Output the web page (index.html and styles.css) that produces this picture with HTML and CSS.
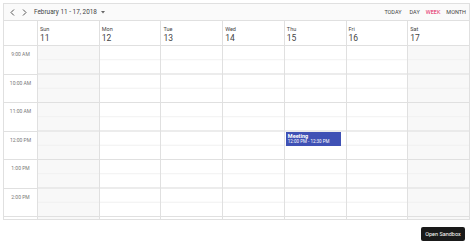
FILE: index.html
```html
<!DOCTYPE html>
<html lang="en">
<head>
    <meta charset="UTF-8">
    <title>Scheduler</title>
    <link rel="stylesheet" href="styles.css">
</head>
<body>
    <div class="schedule">
        <div class="toolbar">
            <div class="nav">
                <svg class="chev" width="5" height="7" viewBox="0 0 5 7"><path d="M4 0.5L1 3.5L4 6.5" fill="none" stroke="#555" stroke-width="1"/></svg>
                <svg class="chev" width="5" height="7" viewBox="0 0 5 7"><path d="M1 0.5L4 3.5L1 6.5" fill="none" stroke="#555" stroke-width="1"/></svg>
                <span class="range">February 11 - 17, 2018</span>
                <svg class="caret" width="4" height="3" viewBox="0 0 4 3"><path d="M0 0h4L2 2.5z" fill="#666"/></svg>
            </div>
            <div class="views">
                <span class="today">TODAY</span>
                <span>DAY</span>
                <span class="active">WEEK</span>
                <span>MONTH</span>
            </div>
        </div>
        <div class="head">
            <div class="corner"></div>
            <div class="day"><span class="dname">Sun</span><span class="dnum">11</span></div>
            <div class="day"><span class="dname">Mon</span><span class="dnum">12</span></div>
            <div class="day"><span class="dname">Tue</span><span class="dnum">13</span></div>
            <div class="day"><span class="dname">Wed</span><span class="dnum">14</span></div>
            <div class="day"><span class="dname">Thu</span><span class="dnum">15</span></div>
            <div class="day"><span class="dname">Fri</span><span class="dnum">16</span></div>
            <div class="day"><span class="dname">Sat</span><span class="dnum">17</span></div>
        </div>
        <div class="body">
            <div class="times">
                <div class="hour">9:00 AM</div>
                <div class="hour">10:00 AM</div>
                <div class="hour">11:00 AM</div>
                <div class="hour">12:00 PM</div>
                <div class="hour">1:00 PM</div>
                <div class="hour">2:00 PM</div>
                <div class="hour"></div>
            </div>
            <div class="col off"></div>
            <div class="col"></div>
            <div class="col"></div>
            <div class="col"></div>
            <div class="col">
                <div class="event">
                    <div class="ev-title">Meeting</div>
                    <div class="ev-time">12:00 PM - 12:30 PM</div>
                </div>
            </div>
            <div class="col"></div>
            <div class="col off"></div>
        </div>
    </div>
    <div class="footer">
        <button class="sandbox">Open Sandbox</button>
    </div>
</body>
</html>
```

FILE: styles.css
```css
body {
    margin: 0;
    padding: 3px;
    font-family: Roboto, "Liberation Sans", sans-serif;
    color: #333;
    background: #fff;
}

.schedule {
    width: 465px;
    border: 1px solid #e0e0e0;
}

.toolbar {
    height: 16px;
    background: #fafafa;
    border-bottom: 1px solid #e0e0e0;
    display: flex;
    align-items: center;
    justify-content: space-between;
    font-size: 6.4px;
}

.nav {
    display: flex;
    align-items: center;
    padding-left: 6px;
}

.chev {
    margin-right: 7px;
}

.range {
    margin-left: 0;
    color: #444;
}

.caret {
    margin-left: 4px;
}

.views {
    display: flex;
    gap: 6px;
    padding-right: 3px;
    font-size: 5.5px;
    color: #444;
}

.views .today {
    margin-right: 2px;
}

.views .active {
    color: #e3165b;
}

.head,
.body {
    display: grid;
    grid-template-columns: 33px repeat(7, 1fr);
}

.head {
    height: 24px;
    border-bottom: 1px solid #e0e0e0;
}

.day {
    border-left: 1px solid #e0e0e0;
    display: flex;
    flex-direction: column;
    padding: 5px 0 0 2px;
    color: #444;
}

.dname {
    font-size: 5.5px;
    line-height: 7px;
}

.dnum {
    font-size: 8.5px;
    line-height: 10px;
}

.body {
    height: 173px;
    overflow: hidden;
}

.hour {
    height: 28.5px;
    box-sizing: border-box;
    border-bottom: 1px solid #e0e0e0;
    font-size: 5px;
    color: #777;
    text-align: center;
    padding-top: 5px;
}

.col {
    position: relative;
    border-left: 1px solid #e0e0e0;
    background-image:
        linear-gradient(#e0e0e0 1px, transparent 1px),
        linear-gradient(#f0f0f0 1px, transparent 1px);
    background-size: 100% 28.5px, 100% 14.25px;
    background-position: 0 27.5px, 0 13.25px;
}

.col.off {
    background-color: #f8f8f8;
}

.event {
    position: absolute;
    top: 85.5px;
    left: 1px;
    width: 55px;
    height: 14px;
    box-sizing: border-box;
    padding: 1px 2px;
    background: #3f51b5;
    color: #fff;
}

.ev-title {
    font-size: 5.5px;
    font-weight: bold;
    line-height: 6.5px;
}

.ev-time {
    font-size: 4.5px;
    line-height: 5.5px;
}

.footer {
    display: flex;
    justify-content: flex-end;
    padding: 7px 6px 0 0;
}

.sandbox {
    background: #1a1a1a;
    color: #fff;
    border: none;
    border-radius: 2px;
    font-family: Roboto, "Liberation Sans", sans-serif;
    font-size: 5.5px;
    width: 44px;
    height: 14px;
    padding: 0;
}
```
